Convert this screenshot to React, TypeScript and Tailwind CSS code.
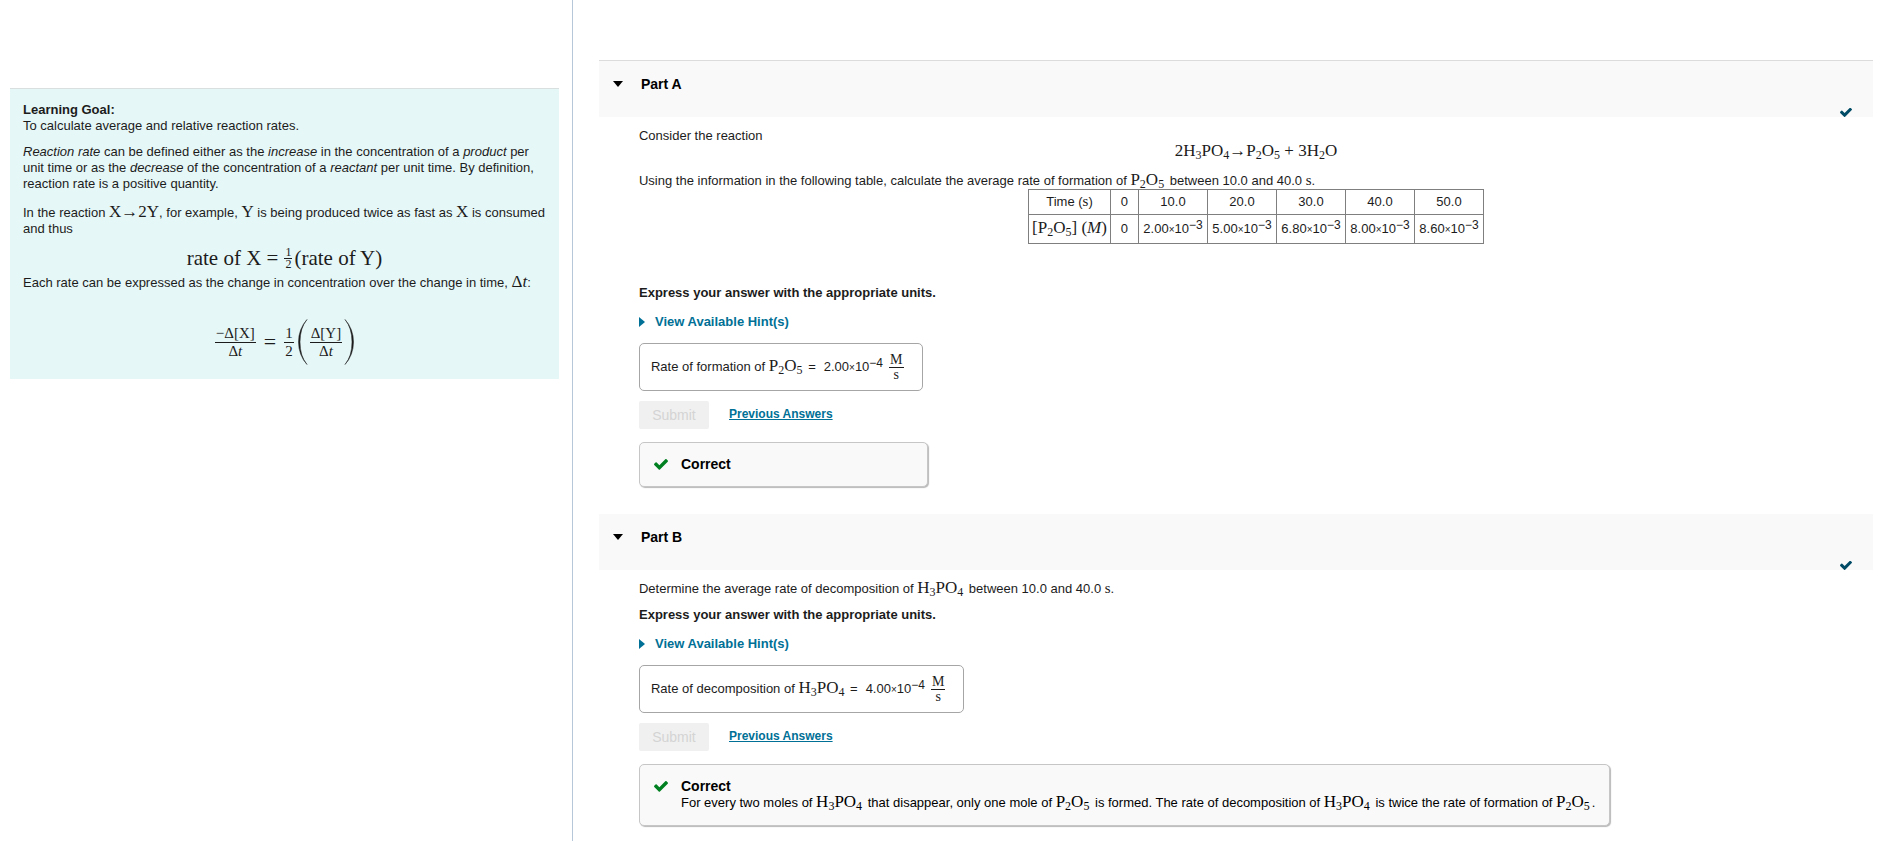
import type { ReactNode } from "react";

type ChildrenProps = {
  children: ReactNode;
};

const CHECK_PATH =
  "M1671 566q0 40-28 68l-724 724-136 136q-28 28-68 28t-68-28l-136-136-362-362q-28-28-28-68t28-68l136-136q28-28 68-28t68 28l294 295 656-657q28-28 68-28t68 28l136 136q28 28 28 68z";

const CheckIcon = ({ className }: { className: string }) => (
  <svg viewBox="121 370 1550 1152" className={className} aria-hidden="true">
    <path d={CHECK_PATH} fill="currentColor" />
  </svg>
);

const Tex = ({ children }: ChildrenProps) => (
  <span className="font-['Liberation_Serif',serif] text-[17px] leading-0 whitespace-nowrap">
    {children}
  </span>
);

const Sub = ({ children }: ChildrenProps) => (
  <sub className="text-[12px]">{children}</sub>
);

const Seconds = () => (
  <span className="font-['Liberation_Serif',serif] text-[15px] leading-0">
    s
  </span>
);

const P2O5 = () => (
  <span className="mr-[2px]">
    <Tex>
      P<Sub>2</Sub>O<Sub>5</Sub>
    </Tex>
  </span>
);

const H3PO4 = () => (
  <span className="mr-[2px]">
    <Tex>
      H<Sub>3</Sub>PO<Sub>4</Sub>
    </Tex>
  </span>
);

type ScientificProps = {
  value: string;
  exponent: string;
};

const Scientific = ({ value, exponent }: ScientificProps) => (
  <span className="whitespace-nowrap">
    {value}
    <span className="text-[10px]">×</span>10
    <sup className="-top-1 text-[12px]">{exponent}</sup>
  </span>
);

const MolarPerSecond = () => (
  <span className="flex flex-col items-center font-['Liberation_Serif',serif] text-[14px] leading-[14px]">
    <span className="border-b border-current px-px">M</span>
    <span>s</span>
  </span>
);

type ParenProps = {
  side: "left" | "right";
};

const Paren = ({ side }: ParenProps) => (
  <svg viewBox="0 0 10 46" className="h-[46px] w-[10px]" aria-hidden="true">
    <path
      d={
        side === "left"
          ? "M9 0.500Q2 9 2 23T9 45.500Q0.500 36 0.500 23T9 0.500z"
          : "M1 0.500Q8 9 8 23T1 45.500Q9.500 36 9.500 23T1 0.500z"
      }
      fill="currentColor"
      stroke="currentColor"
      strokeWidth="0.500"
    />
  </svg>
);

type FractionProps = {
  top: ReactNode;
  bottom: ReactNode;
};

const Fraction = ({ top, bottom }: FractionProps) => (
  <span className="flex flex-col items-center text-[15px] leading-[17px]">
    <span className="border-b border-current px-px">{top}</span>
    <span>{bottom}</span>
  </span>
);

const LearningGoal = () => (
  <section className="border-t border-[#d9dfdf] bg-[#e6f7f7] px-[13px] pt-[13px] pb-[14px]">
    <h2 className="font-bold">Learning Goal:</h2>
    <p>To calculate average and relative reaction rates.</p>
    <p className="mt-[10px]">
      <i>Reaction rate</i> can be defined either as the <i>increase</i> in the
      concentration of a <i>product</i> per unit time or as the{" "}
      <i>decrease</i> of the concentration of a <i>reactant</i> per unit time.
      By definition, reaction rate is a positive quantity.
    </p>
    <p className="mt-[13px]">
      In the reaction <Tex>X→2Y</Tex>, for example, <Tex>Y</Tex> is being
      produced twice as fast as <Tex>X</Tex> is consumed and thus
    </p>
    <div className="flex items-center justify-center pt-[9px] pb-[5px] font-['Liberation_Serif',serif] text-[21px] leading-6">
      <span>rate of X =</span>
      <span className="ml-[6px] flex flex-col items-center text-[12px] leading-[11px]">
        <span className="border-b border-current px-px">1</span>
        <span>2</span>
      </span>
      <span className="ml-[2px]">(rate of Y)</span>
    </div>
    <p>
      Each rate can be expressed as the change in concentration over the change
      in time, <Tex>Δ<i>t</i></Tex>:
    </p>
    <div className="mt-7 flex items-center justify-center font-['Liberation_Serif',serif]">
      <Fraction top="−Δ[X]" bottom={<>Δ<i>t</i></>} />
      <span className="mx-2 text-[22px] leading-6">=</span>
      <Fraction top="1" bottom="2" />
      <span className="ml-1 flex items-center gap-[2px]">
        <Paren side="left" />
        <Fraction top="Δ[Y]" bottom={<>Δ<i>t</i></>} />
        <Paren side="right" />
      </span>
    </div>
  </section>
);

const PartHeader = ({ title }: { title: string }) => (
  <header className="flex h-14 items-end justify-between bg-[#f9f9f9] pr-[21px]">
    <h2 className="self-start pt-[14px] text-[14px] leading-[18px] font-bold text-black">
      <button type="button" className="flex items-center gap-[18px] pl-[14px]">
        <svg viewBox="0 0 10 6" className="h-[6px] w-[10px]" aria-hidden="true">
          <path d="M0 0h10L5 6z" fill="currentColor" />
        </svg>
        {title}
      </button>
    </h2>
    <CheckIcon className="h-[9px] w-3 text-[#004b66]" />
  </header>
);

const Hints = () => (
  <button
    type="button"
    className="flex items-center gap-[10px] leading-4 font-bold text-[#007096]"
  >
    <svg viewBox="0 0 6 10" className="h-[10px] w-[6px]" aria-hidden="true">
      <path d="M0 0v10l6-5z" fill="currentColor" />
    </svg>
    View Available Hint(s)
  </button>
);

type AnswerProps = {
  label: ReactNode;
  value: string;
};

const Answer = ({ label, value }: AnswerProps) => (
  <div className="mt-[13px] flex h-12 w-fit items-center rounded-[5px] border border-[#a6a6a6] pr-[18px] pl-[11px]">
    <span>{label} =</span>
    <span className="mr-[6px] ml-2">
      <Scientific value={value} exponent="−4" />
    </span>
    <MolarPerSecond />
  </div>
);

const Actions = () => (
  <div className="mt-[10px] flex items-center gap-5">
    <button
      type="submit"
      disabled
      className="h-7 w-[70px] rounded-[2px] bg-[#f0f0f0] text-[14px] text-[#d4d4d4]"
    >
      Submit
    </button>
    <a
      href="#previous"
      className="mb-[3px] text-[12px] leading-4 font-bold text-[#007096] underline"
    >
      Previous Answers
    </a>
  </div>
);

type FeedbackProps = {
  className: string;
  children?: ReactNode;
};

const Feedback = ({ className, children }: FeedbackProps) => (
  <div
    className={`mt-[13px] flex rounded-[5px] border border-[#c6c6c6] bg-[#f9f9f9] pr-[14px] pl-[14px] text-black shadow-[1px_1px_1px_#b8b8b8] ${className}`}
  >
    <CheckIcon className="mt-4 h-[11px] w-[14px] shrink-0 text-[#008020]" />
    <div className="ml-[13px] pt-3">
      <h3 className="text-[14px] leading-[18px] font-bold">Correct</h3>
      {children}
    </div>
  </div>
);

const times = ["10.0", "20.0", "30.0", "40.0", "50.0"];
const concentrations = ["2.00", "5.00", "6.80", "8.00", "8.60"];

const ConcentrationTable = () => (
  <table className="mx-auto border-collapse text-center">
    <tbody>
      <tr className="h-[25px]">
        <th scope="row" className="w-[82px] border border-[#7f7f7f] font-normal">
          Time (<Seconds />)
        </th>
        <td className="w-7 border border-[#7f7f7f]">0</td>
        {times.map((time) => (
          <td key={time} className="w-[69px] border border-[#7f7f7f]">
            {time}
          </td>
        ))}
      </tr>
      <tr className="h-[29px]">
        <th scope="row" className="border border-[#7f7f7f] font-normal whitespace-nowrap">
          <Tex>
            [P<Sub>2</Sub>O<Sub>5</Sub>] (<i>M</i>)
          </Tex>
        </th>
        <td className="border border-[#7f7f7f]">0</td>
        {concentrations.map((value) => (
          <td key={value} className="border border-[#7f7f7f]">
            <Scientific value={value} exponent="−3" />
          </td>
        ))}
      </tr>
    </tbody>
  </table>
);

const PartA = () => (
  <section className="border-t border-[#dcdcdc]">
    <PartHeader title="Part A" />
    <div className="pt-[11px] pl-10">
      <p>Consider the reaction</p>
      <p className="text-center">
        <Tex>
          2H<Sub>3</Sub>PO<Sub>4</Sub>→P<Sub>2</Sub>O<Sub>5</Sub> + 3H
          <Sub>2</Sub>O
        </Tex>
      </p>
      <p className="mt-[13px]">
        Using the information in the following table, calculate the average rate
        of formation of <P2O5 /> between 10.0 and 40.0 <Seconds />.
      </p>
      <ConcentrationTable />
      <p className="mt-[41px] font-bold">
        Express your answer with the appropriate units.
      </p>
      <div className="mt-[13px]">
        <Hints />
      </div>
      <Answer
        label={
          <>
            Rate of formation of <P2O5 />
          </>
        }
        value="2.00"
      />
      <Actions />
      <Feedback className="h-[45px] w-[289px]" />
    </div>
  </section>
);

const PartB = () => (
  <section className="mt-[27px]">
    <PartHeader title="Part B" />
    <div className="pt-[11px] pl-10">
      <p>
        Determine the average rate of decomposition of <H3PO4 /> between 10.0
        and 40.0 <Seconds />.
      </p>
      <p className="mt-[10px] font-bold">
        Express your answer with the appropriate units.
      </p>
      <div className="mt-[13px]">
        <Hints />
      </div>
      <Answer
        label={
          <>
            Rate of decomposition of <H3PO4 />
          </>
        }
        value="4.00"
      />
      <Actions />
      <Feedback className="w-fit pb-[14px]">
        <p>
          For every two moles of <H3PO4 /> that disappear, only one mole of{" "}
          <P2O5 /> is formed. The rate of decomposition of <H3PO4 /> is twice
          the rate of formation of <P2O5 />.
        </p>
      </Feedback>
    </div>
  </section>
);

export default function App() {
  return (
    <div className="flex min-h-screen bg-white font-['Liberation_Sans',Arial,sans-serif] text-[13px] leading-4 text-[#1c1c1c]">
      <aside className="w-[30.43%] shrink-0 border-r border-[#b5c7d8] pt-[88px] pr-[13px] pl-[10px]">
        <LearningGoal />
      </aside>
      <main className="min-w-0 flex-1 pt-[60px] pr-[10px] pl-[26px]">
        <PartA />
        <PartB />
      </main>
    </div>
  );
}
